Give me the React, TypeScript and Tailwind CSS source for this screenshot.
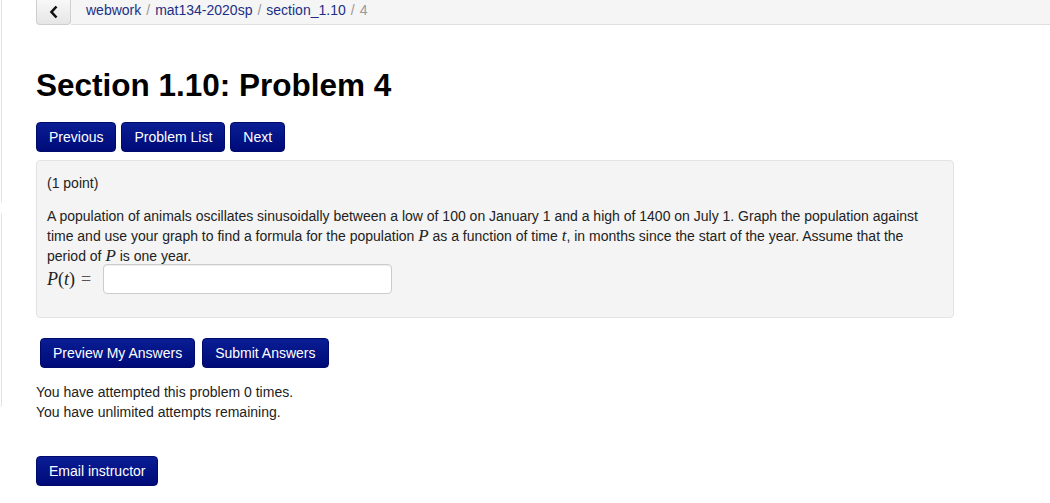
import React from 'react';

const btn =
  'h-[30px] px-[12px] rounded-[4px] text-[14px] text-white bg-gradient-to-b from-[#0a1d94] to-[#000a78] border border-[#000a6a] flex items-center';

function MathVar({ children }: { children: React.ReactNode }) {
  return <span className="italic text-[17px] leading-none" style={{ fontFamily: '"Liberation Serif", serif' }}>{children}</span>;
}

export default function App() {
  return (
    <div className="flex min-h-[503px] bg-white text-[#222]" style={{ fontFamily: '"Liberation Sans", Arial, sans-serif' }}>
      <div className="w-[2px] flex flex-col">
        <div className="h-[203px] border-r border-[#e2e2e2] rounded-br-[4px]" />
        <div className="h-[10px]" />
        <div className="h-[194px] border-r border-[#e2e2e2] rounded-tr-[4px] rounded-br-[4px]" />
      </div>
      <div className="flex-1 pl-[34px]">
        {/* breadcrumb */}
        <div className="flex h-[25px]">
          <div className="w-[35px] h-[25px] bg-gradient-to-b from-[#f8f8f8] to-[#e6e6e6] border border-t-0 border-[#cfcfcf] rounded-b-[4px] flex items-center justify-center">
            <svg width="10" height="14" viewBox="0 0 10 14">
              <path d="M7.5 1.5 L2.5 7 L7.5 12.5" fill="none" stroke="#111" strokeWidth="2.6" />
            </svg>
          </div>
          <div className="flex-1 bg-[#f5f5f5] border-b border-[#e0e0e0] pl-[15px] text-[14px] leading-[20px] -mt-[4px] h-[29px] flex items-center">
            <span className="text-[#1c2f85]">webwork</span>
            <span className="text-[#999] px-[5px]">/</span>
            <span className="text-[#1c2f85]">mat134-2020sp</span>
            <span className="text-[#999] px-[5px]">/</span>
            <span className="text-[#1c2f85]">section_1.10</span>
            <span className="text-[#999] px-[5px]">/</span>
            <span className="text-[#999]">4</span>
          </div>
        </div>

        <h1 className="mt-[41px] text-[31.5px] leading-[38px] font-bold text-black">Section 1.10: Problem 4</h1>

        <div className="mt-[18px] flex gap-[5px]">
          <button className={btn}>Previous</button>
          <button className={btn}>Problem List</button>
          <button className={btn}>Next</button>
        </div>

        <div className="mt-[8px] w-[918px] bg-[#f4f4f4] border border-[#e3e3e3] rounded-[4px] pl-[10px] pr-[19px] pt-[12px] pb-[24px] text-[14px] leading-[20px]">
          <p>(1 point)</p>
          <p className="mt-[13px]">
            A population of animals oscillates sinusoidally between a low of 100 on January 1 and a high of 1400 on July 1. Graph the population against
            time and use your graph to find a formula for the population <MathVar>P</MathVar> as a function of time <MathVar>t</MathVar>, in months since the start of the year. Assume that the
            period of <MathVar>P</MathVar> is one year.
          </p>
          <div className="flex items-center gap-[12px] -mt-[2px] mb-[-1px] h-[30px]">
            <span className="text-[18px] leading-none" style={{ fontFamily: '"Liberation Serif", serif' }}>
              <i>P</i>(<i>t</i>)<span className="text-[#555] ml-[6px]">=</span>
            </span>
            <input className="w-[289px] h-[30px] bg-white border border-[#cccccc] rounded-[4px] shadow-[inset_0_1px_1px_rgba(0,0,0,0.075)]" />
          </div>
        </div>

        <div className="mt-[20px] ml-[4px] flex gap-[7px]">
          <button className={btn}>Preview My Answers</button>
          <button className={btn}>Submit Answers</button>
        </div>

        <div className="mt-[14px] text-[14px] leading-[20px]">
          <p>You have attempted this problem 0 times.</p>
          <p>You have unlimited attempts remaining.</p>
        </div>

        <div className="mt-[34px]">
          <button className={btn}>Email instructor</button>
        </div>
      </div>
    </div>
  );
}
